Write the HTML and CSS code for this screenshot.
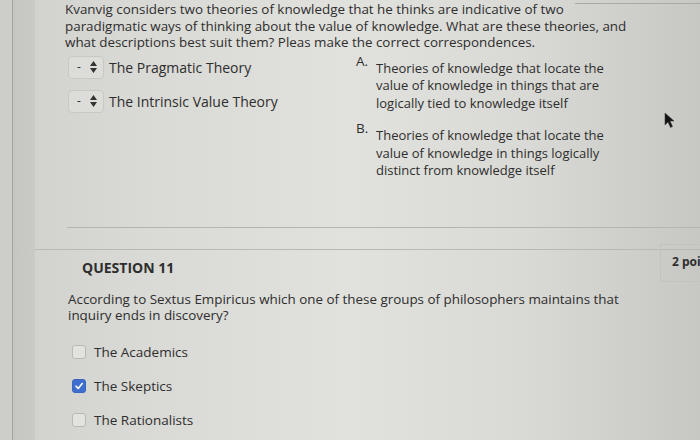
FILE: index.html
```html
<!DOCTYPE html>
<html>
<head>
<meta charset="utf-8">
<link rel="stylesheet" href="styles.css">
</head>
<body>
<div class="page">
  <div class="gutter"><div class="gutter-line"></div></div>
  <div class="content">
    <div class="top-rule"></div>
    <section class="q10">
      <p class="qtext">Kvanvig considers two theories of knowledge that he thinks are indicative of two<br>paradigmatic ways of thinking about the value of knowledge. What are these theories, and<br>what descriptions best suit them? Pleas make the correct correspondences.</p>
      <div class="match">
        <div class="left-col">
          <div class="pick">
            <span class="select"><span class="dash">-</span><svg class="arrows" width="7" height="12" viewBox="0 0 7 12"><path d="M3.5 0 L7 5 L0 5 Z M0 7 L7 7 L3.5 12 Z" fill="#333"/></svg></span>
            <span class="pick-label">The Pragmatic Theory</span>
          </div>
          <div class="pick">
            <span class="select"><span class="dash">-</span><svg class="arrows" width="7" height="12" viewBox="0 0 7 12"><path d="M3.5 0 L7 5 L0 5 Z M0 7 L7 7 L3.5 12 Z" fill="#333"/></svg></span>
            <span class="pick-label">The Intrinsic Value Theory</span>
          </div>
        </div>
        <div class="right-col">
          <div class="answer">
            <span class="letter">A.</span>
            <span class="answer-text">Theories of knowledge that locate the<br>value of knowledge in things that are<br>logically tied to knowledge itself</span>
          </div>
          <div class="answer">
            <span class="letter">B.</span>
            <span class="answer-text">Theories of knowledge that locate the<br>value of knowledge in things logically<br>distinct from knowledge itself</span>
          </div>
        </div>
      </div>
      <div class="q10-rule"></div>
    </section>
    <section class="q11">
      <div class="q11-head">
        <h2 class="q-title">QUESTION 11</h2>
        <div class="points">2 poi</div>
      </div>
      <p class="q11-text">According to Sextus Empiricus which one of these groups of philosophers maintains that<br>inquiry ends in discovery?</p>
      <ul class="options">
        <li class="option"><span class="box"></span><span>The Academics</span></li>
        <li class="option"><span class="box checked"><svg width="10" height="10" viewBox="0 0 10 10"><path d="M2 5.2 L4.2 7.4 L8.2 2.6" fill="none" stroke="#fff" stroke-width="1.6" stroke-linecap="round" stroke-linejoin="round"/></svg></span><span>The Skeptics</span></li>
        <li class="option"><span class="box"></span><span>The Rationalists</span></li>
      </ul>
    </section>
  </div>
  <svg class="cursor" width="12" height="18" viewBox="0 0 12 18"><path d="M1 1 L1 13 L4 10 L6.5 15.5 L8.5 14.5 L6 9 L10 9 Z" fill="#111" stroke="#444" stroke-width="0.6"/></svg>
</div>
</body>
</html>
```

FILE: styles.css
```css
html, body {
  margin: 0;
  padding: 0;
}
body {
  width: 700px;
  height: 440px;
  overflow: hidden;
  font-family: "Open Sans", "Liberation Sans", sans-serif;
  color: #2e2e2e;
  background: #d6d6d2;
}
.page {
  position: relative;
  display: flex;
  width: 700px;
  height: 440px;
  background: linear-gradient(90deg, #d0d0cc 0%, #d9d9d5 20%, #e1e1dd 50%, #d9d9d5 75%, #c7c7c3 100%);
}
.gutter {
  width: 35px;
  flex: none;
  display: flex;
  background: linear-gradient(90deg, #cdcdc9 0, #cdcdc9 12px, #c6c6c2 13px, #c9c9c5 35px);
}
.gutter-line {
  width: 1px;
  margin-left: 12px;
  background: #a3a39f;
}
.content {
  flex: 1;
  position: relative;
  display: flex;
  flex-direction: column;
}
.top-rule {
  position: absolute;
  top: 3px;
  left: 540px;
  right: 0;
  height: 1px;
  background: #a9a9a5;
}
.q10 {
  padding-left: 30px;
}
.qtext {
  margin: 1px 0 0 0;
  font-size: 13.4px;
  line-height: 16.5px;
}
.match {
  display: flex;
  margin-top: 5px;
}
.left-col {
  width: 288px;
  display: flex;
  flex-direction: column;
  gap: 11px;
  padding-left: 3px;
}
.pick {
  display: flex;
  align-items: center;
  gap: 5px;
}
.select {
  width: 36px;
  height: 23px;
  box-sizing: border-box;
  border: 1px solid #c8c8c4;
  border-radius: 4px;
  background: #dcdcd8;
  display: flex;
  align-items: center;
  justify-content: space-between;
  padding: 0 6px 0 8px;
}
.dash {
  font-size: 12px;
  line-height: 1;
}
.arrows {
  display: block;
}
.pick-label {
  font-size: 14px;
}
.right-col {
  display: flex;
  flex-direction: column;
  gap: 11px;
}
.answer {
  display: flex;
  align-items: flex-start;
  gap: 5px;
}
.letter {
  font-size: 13.5px;
  line-height: 14px;
  width: 15px;
  margin-top: -2px;
}
.answer-text {
  font-size: 13px;
  line-height: 17.5px;
  padding-top: 4px;
}
.q10-rule {
  height: 1px;
  background: #b4b4b0;
  margin: 47px 0 0 2px;
}
.q11 {
  margin-top: 21px;
  border-top: 1px solid #b8b8b4;
  padding-left: 33px;
  flex: 1;
}
.q11-head {
  display: flex;
  justify-content: space-between;
  align-items: flex-start;
}
.q-title {
  margin: 8px 0 0 14px;
  font-size: 14px;
  font-weight: 700;
}
.points {
  margin-top: -6px;
  width: 40px;
  height: 38px;
  box-sizing: border-box;
  border-left: 1px solid #c2c2be;
  border-top: 1px solid #c2c2be;
  border-bottom: 1px solid #c2c2be;
  border-radius: 3px 0 0 3px;
  padding: 8px 0 0 11px;
  font-size: 12px;
  font-weight: 700;
  white-space: nowrap;
}
.q11-text {
  margin: 9px 0 0 0;
  font-size: 13.4px;
  line-height: 16.5px;
}
.options {
  list-style: none;
  margin: 20px 0 0 4px;
  padding: 0;
  display: flex;
  flex-direction: column;
  gap: 18px;
}
.option {
  display: flex;
  align-items: center;
  gap: 8px;
  font-size: 13.5px;
  line-height: 16px;
}
.box {
  width: 14px;
  height: 14px;
  box-sizing: border-box;
  border: 1px solid #b9b9b5;
  border-radius: 3px;
  background: #e2e2de;
  display: flex;
  align-items: center;
  justify-content: center;
}
.box.checked {
  background: #3f6fce;
  border-color: #3a66c0;
}
.cursor {
  position: absolute;
  left: 664px;
  top: 112px;
}
```
